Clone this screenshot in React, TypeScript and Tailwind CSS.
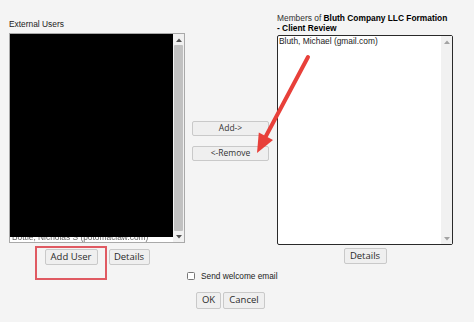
import React from "react";

const sans = { fontFamily: '"Liberation Sans", Arial, sans-serif' };
const btn = { fontFamily: '"Open Sans", "Noto Sans", sans-serif' };

function Arrow({ dir, color }: { dir: "up" | "down"; color: string }) {
  return (
    <svg width="6" height="4" viewBox="0 0 6 4">
      {dir === "up" ? (
        <polygon points="0,4 6,4 3,0.5" fill={color} />
      ) : (
        <polygon points="0,0 6,0 3,3.5" fill={color} />
      )}
    </svg>
  );
}

function Button({ label, className }: { label: string; className: string }) {
  return (
    <button
      style={btn}
      className={`flex items-center justify-center rounded-[2px] border border-[#c9c9c9] bg-[#efefef] text-[#2a2a2a] ${className}`}
    >
      {label}
    </button>
  );
}

export default function App() {
  return (
    <div className="relative h-[322px] w-[474px] overflow-hidden bg-[#f4f4f4]">
      <div className="flex pl-[9px] pt-[13px]">
        {/* left column */}
        <div className="flex w-[176px] flex-col">
          <p style={sans} className="mt-[6px] h-[10px] text-[8.4px] leading-[10px] text-[#222]">
            External Users
          </p>
          <div className="mt-[4px] flex h-[210px] border border-[#a9a9a9] bg-white">
            <div className="flex flex-1 flex-col overflow-hidden">
              <div className="relative z-10 h-[203px] bg-black" />
              <p
                style={sans}
                className="-mt-[5px] pl-[2px] text-[8.4px] leading-[10px] whitespace-nowrap text-[#666] blur-[0.5px]"
              >
                Bottle, Nicholas S (potomaclaw.com)
              </p>
            </div>
            <div className="flex w-[11px] flex-col items-center bg-[#f1f1f1]">
              <div className="flex h-[11px] items-center justify-center">
                <Arrow dir="up" color="#505050" />
              </div>
              <div className="w-[9px] flex-1 rounded-[1px] bg-[#c1c1c1]" />
              <div className="flex h-[11px] items-center justify-center">
                <Arrow dir="down" color="#505050" />
              </div>
            </div>
          </div>
          <div className="mt-[6px] flex justify-center gap-[11px]">
            <Button label="Add User" className="h-[16px] w-[53px] text-[9.5px]" />
            <Button label="Details" className="h-[16px] w-[41px] text-[9.5px]" />
          </div>
        </div>

        {/* middle column */}
        <div className="ml-[7px] flex w-[77px] flex-col gap-[10px] pt-[108px]">
          <Button label="Add->" className="h-[15px] w-[77px] text-[8.5px] text-[#333]" />
          <Button label="<-Remove" className="h-[15px] w-[77px] text-[8.5px] text-[#333]" />
        </div>

        {/* right column */}
        <div className="ml-[8px] flex w-[176px] flex-col">
          <p style={sans} className="text-[8.4px] leading-[10px] text-[#333]">
            Members of <b className="text-black">Bluth Company LLC Formation</b>
            <br />
            <b className="text-black">- Client Review</b>
          </p>
          <div className="mt-[2px] flex h-[210px] rounded-[2px] border-[1.5px] border-[#2a2a2a] bg-white">
            <div className="flex-1">
              <p style={sans} className="pl-[1px] text-[8.4px] leading-[10px] text-[#222]">
                Bluth, Michael (gmail.com)
              </p>
            </div>
            <div className="flex w-[11px] flex-col items-center justify-between bg-[#f1f1f1]">
              <div className="flex h-[11px] items-center justify-center">
                <Arrow dir="up" color="#a3a3a3" />
              </div>
              <div className="flex h-[11px] items-center justify-center">
                <Arrow dir="down" color="#a3a3a3" />
              </div>
            </div>
          </div>
          <div className="mt-[3px] flex justify-center">
            <Button label="Details" className="h-[16px] w-[43px] text-[9.5px]" />
          </div>
        </div>
      </div>

      {/* welcome email */}
      <div className="mt-[6px] flex h-[10px] items-center pl-[187px]">
        <span className="h-[8px] w-[8px] rounded-[1.5px] border border-[#767676] bg-white" />
        <span style={sans} className="ml-[6px] text-[8.3px] text-[#222]">
          Send welcome email
        </span>
      </div>

      {/* ok / cancel */}
      <div className="mt-[11px] flex gap-[2px] pl-[196px]">
        <Button label="OK" className="h-[17px] w-[25px] text-[9.5px]" />
        <Button label="Cancel" className="h-[17px] w-[42px] text-[9.5px]" />
      </div>

      {/* annotations */}
      <div className="absolute left-[35px] top-[246px] h-[34px] w-[72px] border-2 border-[#e05a62]" />
      <svg className="pointer-events-none absolute left-0 top-0" width="474" height="322">
        <line x1="308" y1="57" x2="266" y2="136" stroke="#e8403a" strokeWidth="4" strokeLinecap="round" />
        <polygon points="257,153 273,140 258.8,132.4" fill="#e8403a" />
      </svg>
    </div>
  );
}
